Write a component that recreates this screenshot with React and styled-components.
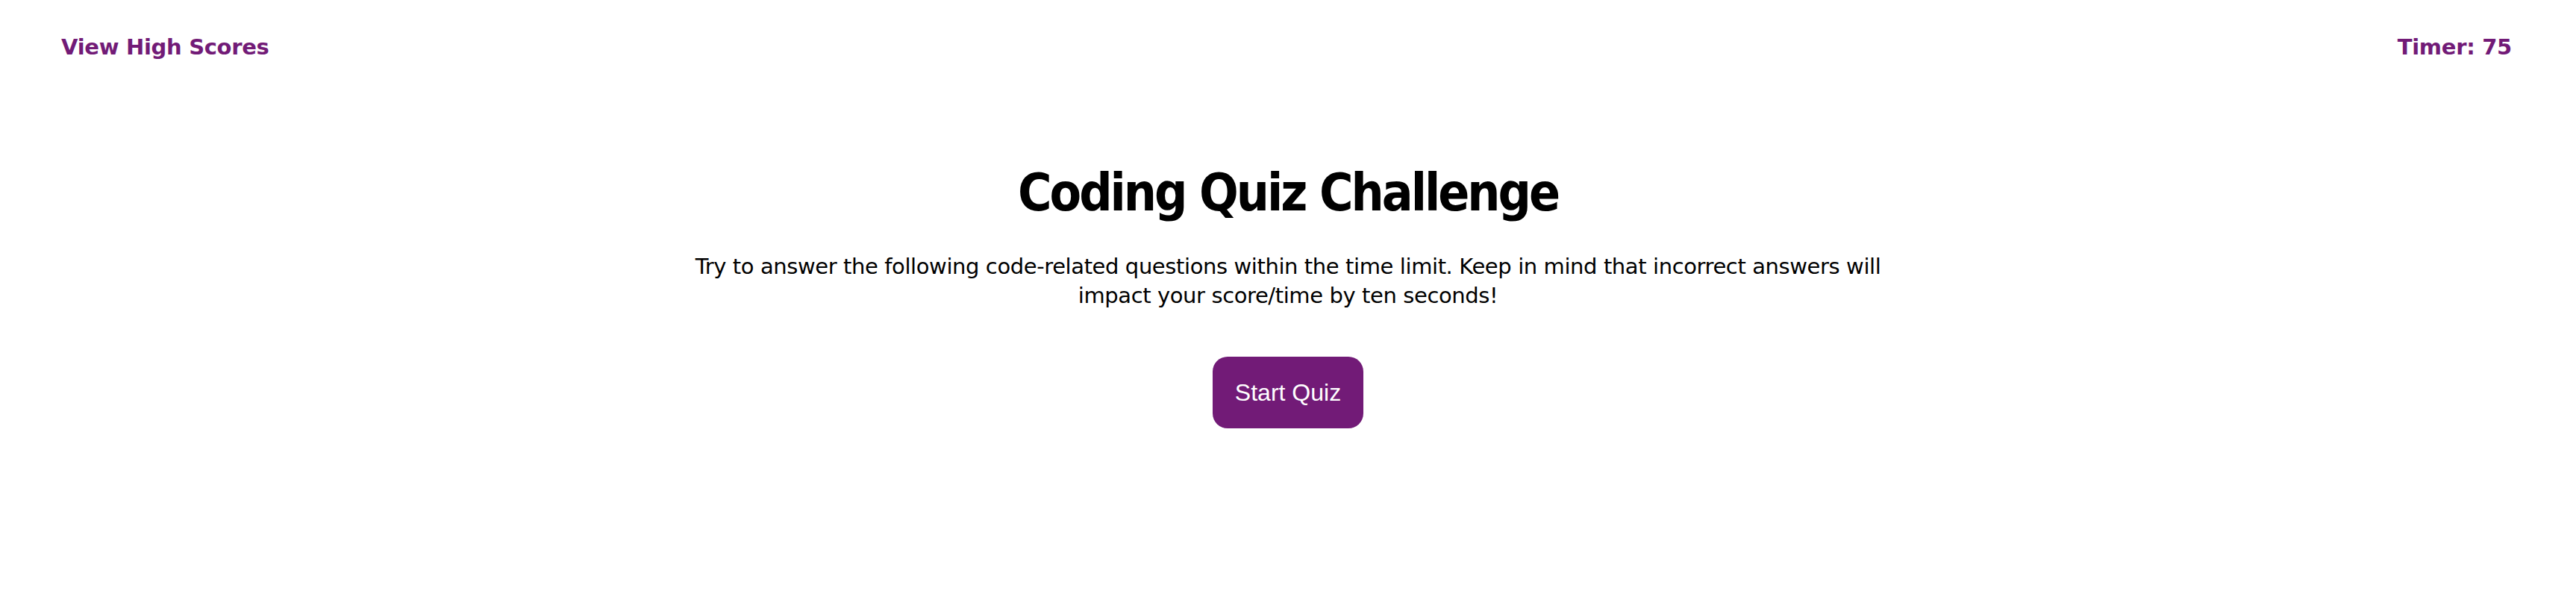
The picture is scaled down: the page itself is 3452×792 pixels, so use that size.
import { createGlobalStyle, styled } from "styled-components";

const purple = "#721b77";

const GlobalStyle = createGlobalStyle`
  * {
    box-sizing: border-box;
  }
  body {
    margin: 0;
    background: #ffffff;
    color: #000000;
    font-family: "DejaVu Sans", sans-serif;
  }
`;

const Header = styled.header`
  display: flex;
  justify-content: space-between;
  align-items: center;
  padding: 48px 86px 0 82px;
`;

const HeaderText = styled.span`
  font-size: 29px;
  line-height: 30px;
  font-weight: 700;
  color: ${purple};
  letter-spacing: -0.3px;
  cursor: ${(props) => (props.$link ? "pointer" : "default")};
`;

const Main = styled.main`
  display: flex;
  flex-direction: column;
  align-items: center;
  padding-top: 146px;
`;

// tahoma-ish: condensed bold, tight tracking
const Title = styled.h1`
  margin: 0;
  font-family: "DejaVu Sans Condensed", "DejaVu Sans", sans-serif;
  font-stretch: condensed;
  font-size: 69px;
  line-height: 69px;
  font-weight: 700;
  letter-spacing: -3px;
`;

const Intro = styled.p`
  margin: 45px 0 0;
  max-width: 1620px;
  text-align: center;
  font-size: 29px;
  line-height: 39px;
  letter-spacing: -0.4px;
`;

const StartButton = styled.button`
  margin-top: 62px;
  width: 202px;
  height: 96px;
  border: none;
  border-radius: 20px;
  background: ${purple};
  color: #ffffff;
  font-family: "Liberation Sans", Arial, sans-serif;
  font-size: 32px;
  cursor: pointer;
`;

const App = () => {
  return (
    <>
      <GlobalStyle />
      <Header>
        <HeaderText $link>View High Scores</HeaderText>
        <HeaderText>Timer: 75</HeaderText>
      </Header>
      <Main>
        <Title>Coding Quiz Challenge</Title>
        <Intro>
          Try to answer the following code-related questions within the time
          limit. Keep in mind that incorrect answers will impact your
          score/time by ten seconds!
        </Intro>
        <StartButton type="button">Start Quiz</StartButton>
      </Main>
    </>
  );
};

export default App;
